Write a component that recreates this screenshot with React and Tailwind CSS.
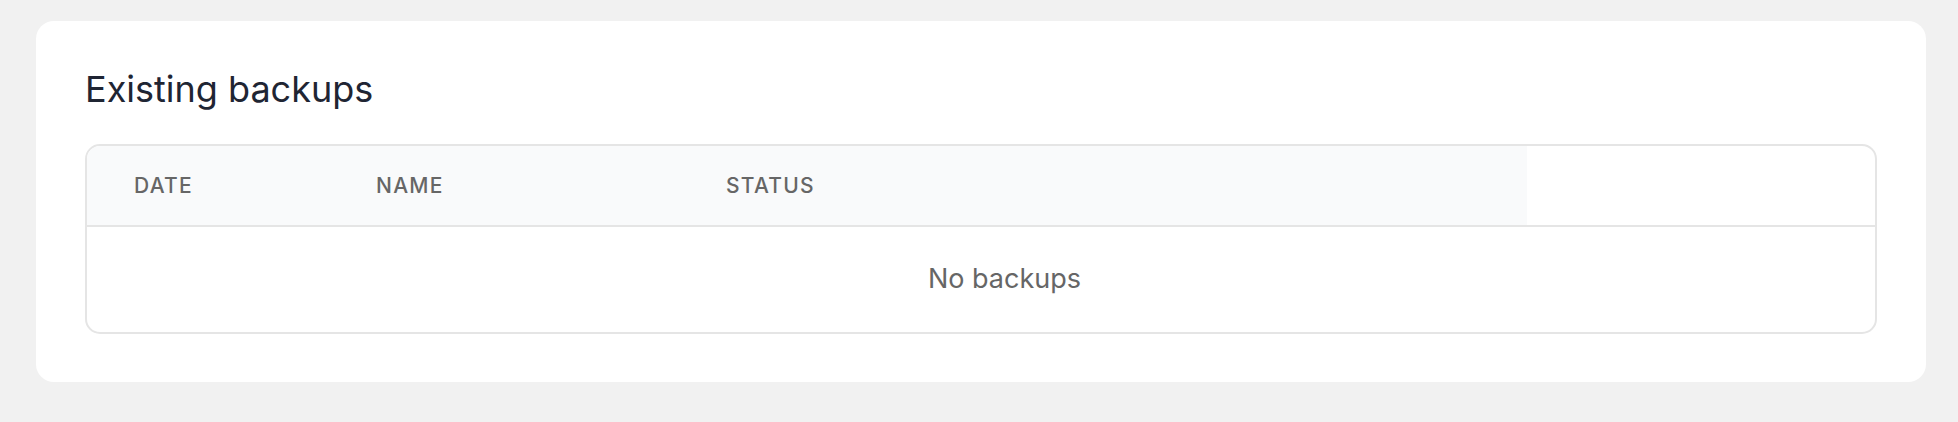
export default function App() {
  return (
    <div className="min-h-[422px] bg-[#f1f1f1] pt-[21px] pl-[36px] font-['Inter',sans-serif]">
      <div className="w-[1890px] h-[361px] bg-white rounded-[18px] px-[49px] pt-[48px]">
        <h2 className="text-[36px] leading-[40px] text-[#1f2533] mb-[35px]">
          Existing backups
        </h2>

        <div className="border-2 border-[#e5e5e5] rounded-[15px] overflow-hidden">
          <table className="w-full table-fixed border-collapse">
            <colgroup>
              <col className="w-[241px]" />
              <col className="w-[350px]" />
              <col className="w-[849px]" />
              <col />
            </colgroup>
            <thead>
              <tr className="border-b-2 border-[#e5e5e5]">
                <th className="h-[80px] bg-[#f9fafb] pl-[47px] text-left text-[21px] font-medium tracking-[0.06em] text-[#666]">
                  DATE
                </th>
                <th className="h-[80px] bg-[#f9fafb] pl-[48px] text-left text-[21px] font-medium tracking-[0.06em] text-[#666]">
                  NAME
                </th>
                <th className="h-[80px] bg-[#f9fafb] pl-[48px] text-left text-[21px] font-medium tracking-[0.06em] text-[#666]">
                  STATUS
                </th>
                <th className="h-[80px]"></th>
              </tr>
            </thead>
            <tbody>
              <tr>
                <td colSpan={4} className="h-[106px] pl-[47px] text-center text-[27px] text-[#666]">
                  No backups
                </td>
              </tr>
            </tbody>
          </table>
        </div>
      </div>
    </div>
  )
}
